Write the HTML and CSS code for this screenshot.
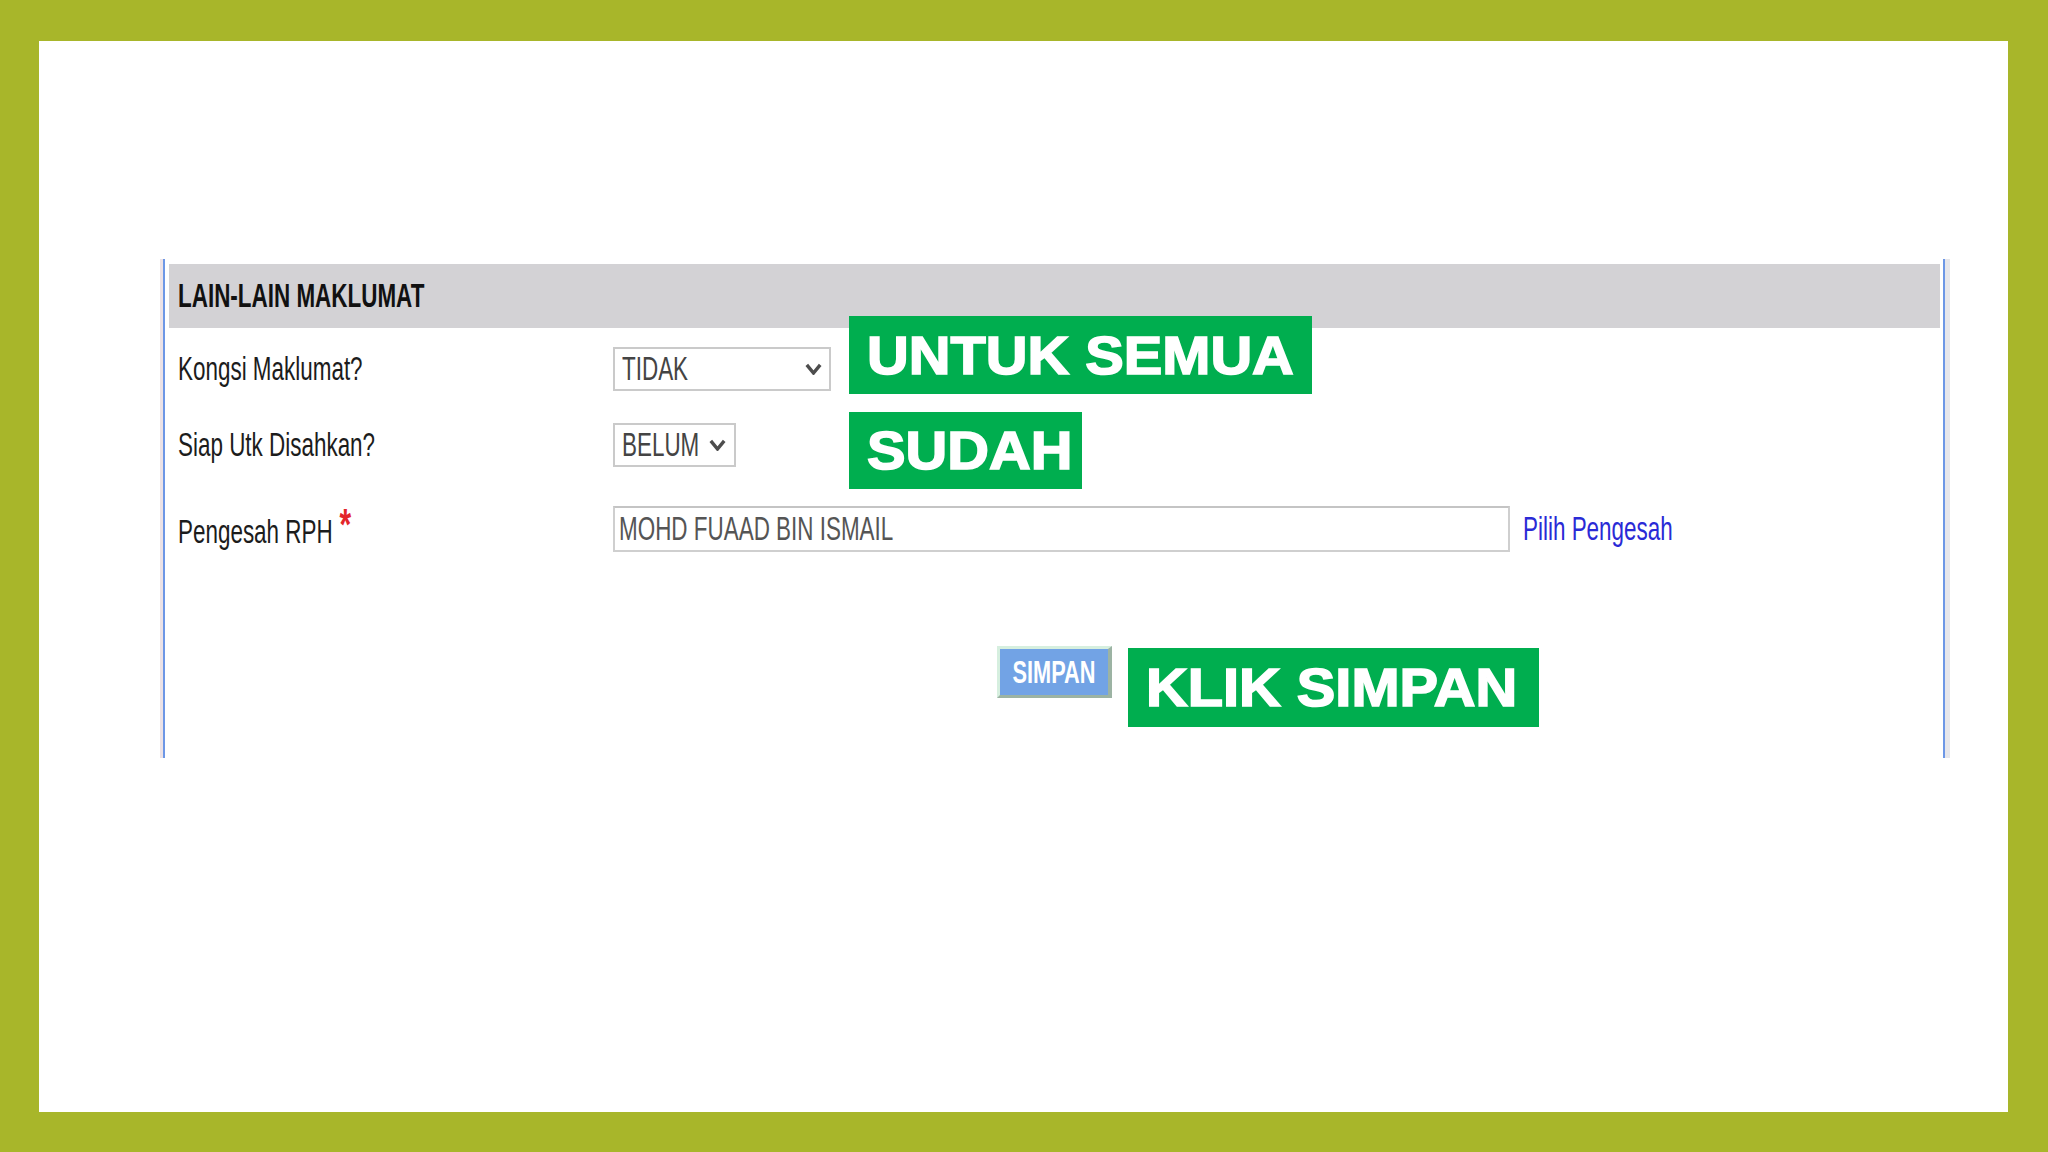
FILE: index.html
```html
<!DOCTYPE html>
<html lang="ms">
<head>
<meta charset="utf-8">
<title>Lain-lain Maklumat</title>
<link rel="stylesheet" href="styles.css">
</head>
<body>
<div class="frame">
  <section class="panel">
    <div class="panel-head"><span class="cn">LAIN-LAIN MAKLUMAT</span></div>
    <div class="form">
      <div class="row r1">
        <div class="label"><span class="cn">Kongsi Maklumat?</span></div>
        <div class="select s-wide">
          <span class="cn">TIDAK</span>
          <svg class="chev" viewBox="0 0 17 12" width="17" height="12"><path d="M1.8 1.8 L8.5 10 L15.2 1.8"/></svg>
        </div>
      </div>
      <div class="row r2">
        <div class="label"><span class="cn">Siap Utk Disahkan?</span></div>
        <div class="select s-narrow">
          <span class="cn">BELUM</span>
          <svg class="chev" viewBox="0 0 17 12" width="17" height="12"><path d="M1.8 1.8 L8.5 10 L15.2 1.8"/></svg>
        </div>
      </div>
      <div class="row r3">
        <div class="label"><span class="cn">Pengesah RPH<span class="req">*</span></span></div>
        <div class="input"><span class="cn">MOHD FUAAD BIN ISMAIL</span></div>
        <a class="link" href="#"><span class="cn">Pilih Pengesah</span></a>
      </div>
    </div>
    <div class="actions">
      <button class="btn" type="button"><span class="cn cn-center">SIMPAN</span></button>
    </div>
  </section>

  <div class="callout c1"><span class="wide">UNTUK SEMUA</span></div>
  <div class="callout c2"><span class="wide">SUDAH</span></div>
  <div class="callout c3"><span class="wide">KLIK SIMPAN</span></div>
</div>
</body>
</html>
```

FILE: styles.css
```css
html, body {
  margin: 0;
  padding: 0;
  background: #a8b62a;
  overflow: hidden;
}

body {
  width: 2048px;
  height: 1152px;
  font-family: "Liberation Sans", Arial, sans-serif;
}

.frame {
  position: relative;
  box-sizing: border-box;
  margin: 41px 40px 0 39px;
  width: 1969px;
  height: 1071px;
  background: #ffffff;
  padding-top: 218px;
  padding-left: 124px;
}

/* condensed text, as in the reference */
.cn {
  display: inline-block;
  white-space: nowrap;
  transform: scaleX(0.68);
  transform-origin: 0 50%;
}

.cn-center {
  transform-origin: 50% 50%;
}

.panel {
  box-sizing: border-box;
  width: 1782px;
  height: 499px;
  border-left: 2px solid #6d97e6;
  border-right: 2px solid #6d97e6;
  box-shadow: -3px 0 0 #ece2e6, 5px 0 0 #e6e6eb;
  padding: 5px 3px 0 4px;
  background: #ffffff;
}

.panel-head {
  height: 64px;
  background: #d3d2d5;
  display: flex;
  align-items: center;
  padding-left: 9px;
  font-size: 33px;
  font-weight: bold;
  color: #111111;
}

.form {
  padding-left: 9px;
}

.row {
  display: flex;
  align-items: center;
}

.r1 { margin-top: 19px; }
.r2 { margin-top: 32px; }
.r3 { margin-top: 39px; }

.label {
  width: 435px;
  flex: none;
  font-size: 33px;
  line-height: 38px;
  color: #1c1c1c;
}

.r3 .label {
  padding-top: 5px;
}

.req {
  color: #e3262a;
  font-size: 44px;
  font-weight: bold;
  line-height: 0;
  margin-left: 10px;
  vertical-align: 3px;
}

.select {
  box-sizing: border-box;
  height: 44px;
  border: 2px solid #cacaca;
  display: grid;
  grid-template-columns: minmax(0, 1fr) auto;
  align-items: center;
  padding: 0 7px;
  font-size: 33px;
  color: #444444;
  background: #ffffff;
}

.s-wide { width: 218px; }
.s-narrow { width: 123px; padding-right: 8px; }

.chev {
  display: block;
}

.chev path {
  fill: none;
  stroke: #4d4d4d;
  stroke-width: 3.4;
  stroke-linejoin: miter;
}

.input {
  box-sizing: border-box;
  width: 897px;
  height: 46px;
  border: 2px solid #cfcfcf;
  border-top-color: #c4c4c4;
  display: flex;
  align-items: center;
  padding-left: 4px;
  font-size: 33px;
  color: #555555;
  background: #ffffff;
}

.link {
  margin-left: 13px;
  font-size: 33px;
  color: #2a2ad6;
  text-decoration: none;
}

.actions {
  display: flex;
  justify-content: center;
  margin-top: 94px;
}

.btn {
  box-sizing: border-box;
  width: 115px;
  height: 52px;
  margin: 0;
  padding: 0;
  display: flex;
  align-items: center;
  justify-content: center;
  border-style: solid;
  border-width: 3px 4px 3px 3px;
  border-color: #d6efdf #9cb3a3 #9cb3a3 #d6efdf;
  background: #72a3e5;
  color: #ffffff;
  font-family: "Liberation Sans", Arial, sans-serif;
  font-size: 32px;
  font-weight: bold;
  cursor: pointer;
}

.callout {
  position: absolute;
  box-sizing: border-box;
  display: flex;
  align-items: center;
  padding-left: 18px;
  background: #00ae4f;
  color: #ffffff;
  font-family: "Liberation Sans", Arial, sans-serif;
  font-weight: bold;
  font-size: 53px;
  line-height: 1;
  white-space: nowrap;
}

.callout .wide {
  display: inline-block;
  transform: scaleX(1.09);
  transform-origin: 0 50%;
  -webkit-text-stroke: 1.6px #ffffff;
}

.c1 { left: 810px; top: 275px; width: 463px; height: 78px; }
.c2 { left: 810px; top: 371px; width: 233px; height: 77px; }
.c3 { left: 1089px; top: 607px; width: 411px; height: 79px; }
```
